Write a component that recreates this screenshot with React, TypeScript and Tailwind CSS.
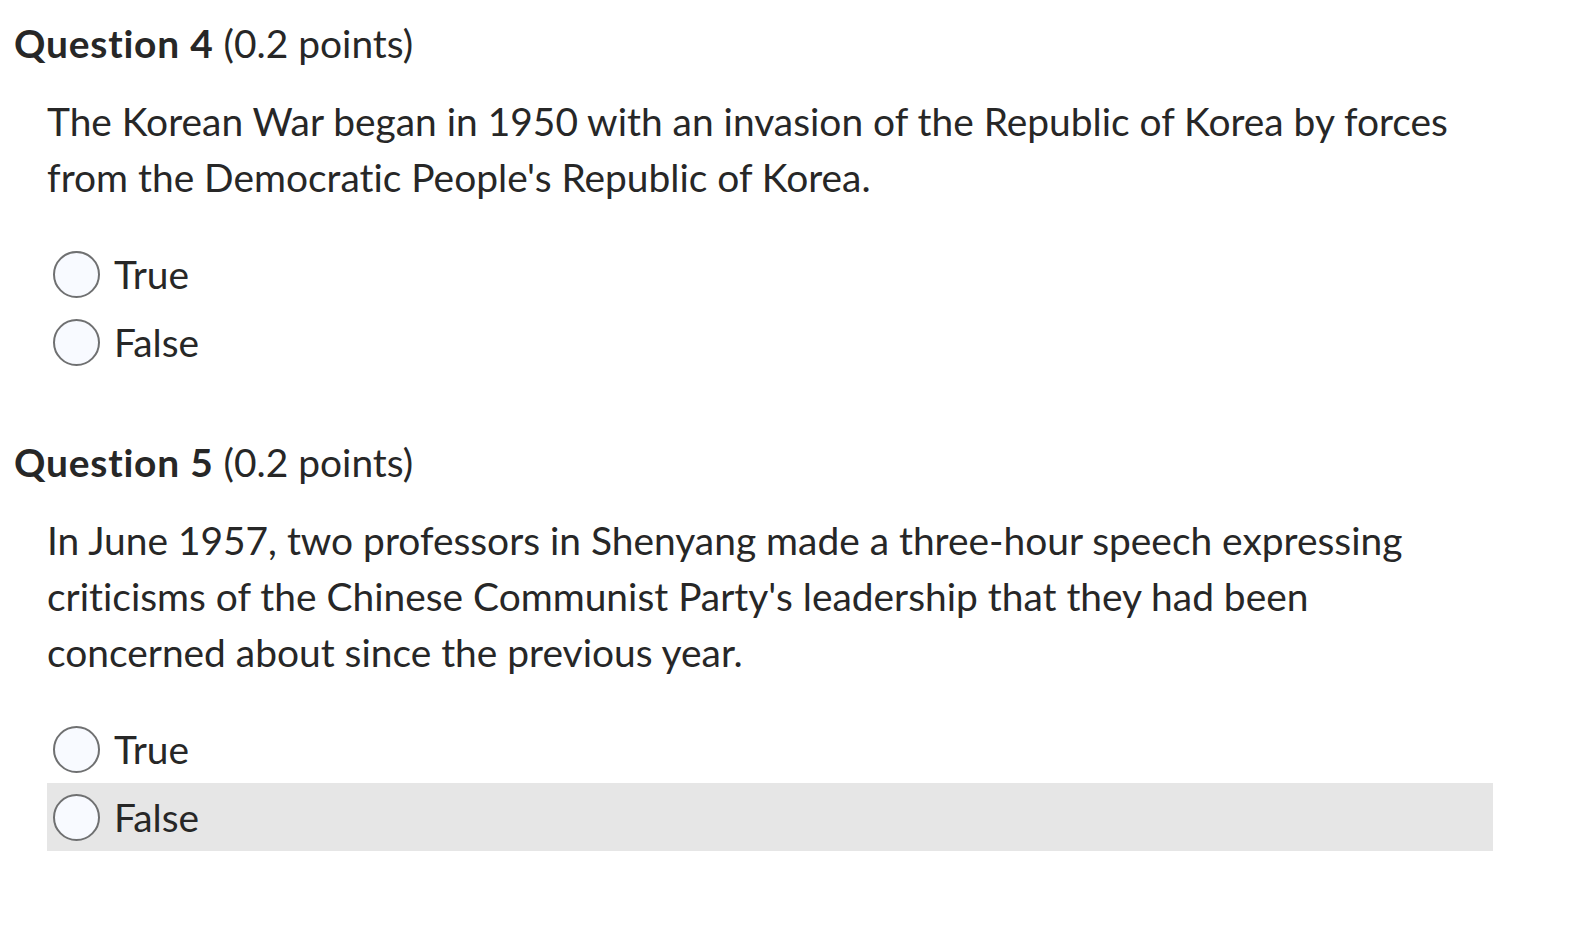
import React from "react";

type Q = { num: number; points: string; text: string; highlightFalse?: boolean };

const questions: Q[] = [
  {
    num: 4,
    points: "(0.2 points)",
    text: "The Korean War began in 1950 with an invasion of the Republic of Korea by forces from the Democratic People's Republic of Korea.",
  },
  {
    num: 5,
    points: "(0.2 points)",
    text: "In June 1957, two professors in Shenyang made a three-hour speech expressing criticisms of the Chinese Communist Party's leadership that they had been concerned about since the previous year.",
    highlightFalse: true,
  },
];

function Radio({ label, highlight }: { label: string; highlight?: boolean }) {
  return (
    <div className={`flex h-[68px] items-center gap-[14px] pl-[6px] ${highlight ? "bg-[#e6e6e6]" : ""}`}>
      <span className="h-[47px] w-[47px] shrink-0 rounded-full border-2 border-[#6f7071] bg-[#f8faff]" />
      <span>{label}</span>
    </div>
  );
}

export default function App() {
  return (
    <div
      className="min-h-[928px] bg-white pl-[14px] pt-[15px] text-[#272727] text-[38.9px] leading-[56px]"
      style={{ fontFamily: "Lato, 'Open Sans', sans-serif", fontVariantLigatures: "none" }}
    >
      {questions.map((q, i) => (
        <div key={q.num} className={i > 0 ? "mt-[58px]" : ""}>
          <div>
            <span className="font-bold tracking-[0.8px]">Question {q.num}</span> {q.points}
          </div>
          <div className="ml-[33px] w-[1446px]">
            <p className="mt-[22px] w-[1420px]">{q.text}</p>
            <div className="mt-[35px]">
              <Radio label="True" />
              <Radio label="False" highlight={q.highlightFalse} />
            </div>
          </div>
        </div>
      ))}
    </div>
  );
}
